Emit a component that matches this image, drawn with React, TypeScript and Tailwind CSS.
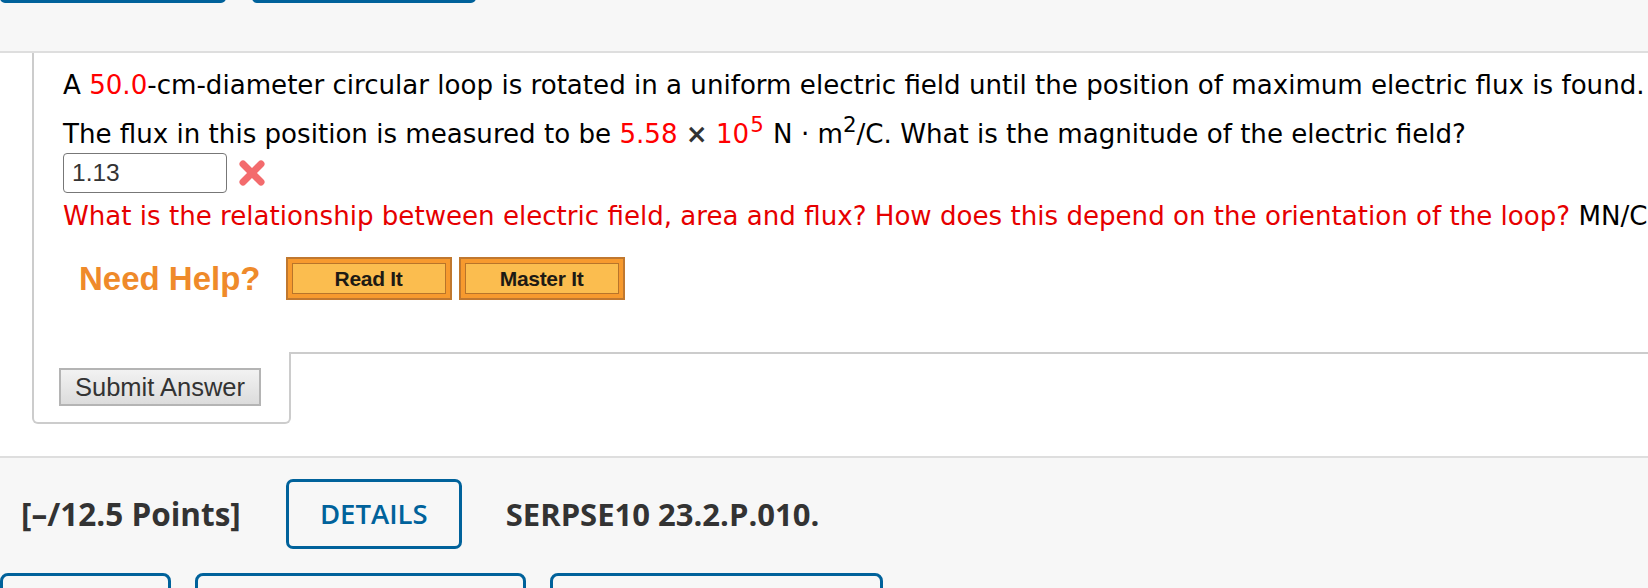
import React from 'react';

const sans = "font-['DejaVu_Sans',Verdana,sans-serif]";
const arial = "font-['Liberation_Sans',Arial,sans-serif]";
const open = "font-['Open_Sans',sans-serif]";

const HelpButton: React.FC<{ label: string }> = ({ label }) => (
  <div className="w-[166px] h-[43px] border-2 border-[#c0782f] bg-[#f79a2e] p-[4px]">
    <div className={`h-full border border-[#b8742a] bg-[#fbbd4f] flex items-center justify-center text-[21px] font-bold tracking-[-0.3px] text-[#1e1a14] ${arial}`}>
      {label}
    </div>
  </div>
);

const WrongMark: React.FC = () => (
  <svg width="28" height="28" viewBox="0 0 28 28" className="ml-[11px]">
    <g stroke="#f25b5e" strokeWidth="7" strokeLinecap="round" opacity="0.9">
      <line x1="5" y1="5" x2="23" y2="23" />
      <line x1="23" y1="5" x2="5" y2="23" />
    </g>
  </svg>
);

export default function App() {
  return (
    <div className="w-[1648px] h-[588px] overflow-hidden bg-white flex flex-col">
      {/* top band */}
      <div className="h-[53px] shrink-0 bg-[#f7f7f7] border-b-2 border-[#dedede] flex gap-[26px] items-start">
        <div className="w-[226px] h-[10px] -mt-[7px] border-[3px] border-[#00629b] rounded-[8px]" />
        <div className="w-[224px] h-[10px] -mt-[7px] border-[3px] border-[#00629b] rounded-[8px]" />
      </div>

      {/* question area */}
      <div className="h-[403px] shrink-0 pl-[32px]">
        <div className="h-[299px] border-l-2 border-[#cccccc] pl-[29px] pt-[14px]">
          <div className={`${sans} text-[26.1px] leading-[36px] text-black whitespace-nowrap`}>
            A <span className="text-[#ff0000]">50.0</span>-cm-diameter circular loop is rotated in a uniform electric field until the position of maximum electric flux is found.
          </div>
          <div className={`${sans} text-[26.1px] leading-[36px] text-black whitespace-nowrap mt-[13px]`}>
            The flux in this position is measured to be <span className="text-[#ff0000]">5.58</span>{' '}
            <span className="text-[#333] font-bold">×</span>{' '}
            <span className="text-[#ff0000]">
              10<sup className="text-[82%] ml-[1px] mr-[1px]">5</sup>
            </span>{' '}
            N · m<sup className="text-[82%]">2</sup>/C. What is the magnitude of the electric field?
          </div>
          <div className="flex items-center mt-[1px]">
            <div className={`w-[164px] h-[40px] border-[1.5px] border-[#777] rounded-[4px] flex items-center pl-[8px] text-[24.5px] text-[#333] ${arial}`}>
              1.13
            </div>
            <WrongMark />
          </div>
          <div className={`${sans} text-[26.1px] leading-[36px] whitespace-nowrap mt-[5px] text-[#e60000]`}>
            What is the relationship between electric field, area and flux? How does this depend on the orientation of the loop?{' '}
            <span className="text-black">MN/C</span>
          </div>
          <div className="flex items-center mt-[20px] pl-[16px]">
            <span className={`${arial} font-bold text-[33px] text-[#ef8a2a] mr-[25px]`}>Need Help?</span>
            <HelpButton label="Read It" />
            <div className="w-[7px]" />
            <HelpButton label="Master It" />
          </div>
        </div>
        <div className="flex">
          <div className="w-[259px] h-[72px] border-l-2 border-b-2 border-r-2 border-[#cccccc] rounded-b-[6px] pl-[25px] pt-[16px]">
            <div className={`w-[202px] h-[38px] border-2 border-[#b4b4b4] bg-gradient-to-b from-[#f2f2f2] to-[#dcdcdc] flex items-center justify-center text-[25.5px] text-[#333] ${arial}`}>
              Submit Answer
            </div>
          </div>
          <div className="flex-1 border-t-2 border-[#cccccc]" />
        </div>
      </div>

      {/* next question header */}
      <div className="flex-1 bg-[#f7f7f7] border-t-2 border-[#dedede] pt-[21px]">
        <div className="flex items-center h-[70px]">
          <span className={`${open} font-bold text-[31.5px] text-[#333] ml-[21px]`}>[–/12.5 Points]</span>
          <div className={`ml-[45px] w-[176px] h-[70px] border-[3px] border-[#00629b] rounded-[7px] flex items-center justify-center ${open} font-semibold text-[27.5px] text-[#00629b]`}>
            DETAILS
          </div>
          <span className={`${open} font-bold text-[31px] text-[#333] ml-[44px]`}>SERPSE10 23.2.P.010.</span>
        </div>
        <div className="flex gap-[24px] mt-[24px]">
          <div className="w-[171px] h-[30px] border-[3px] border-[#00629b] rounded-[8px]" />
          <div className="w-[331px] h-[30px] border-[3px] border-[#00629b] rounded-[8px]" />
          <div className="w-[333px] h-[30px] border-[3px] border-[#00629b] rounded-[8px]" />
        </div>
      </div>
    </div>
  );
}
